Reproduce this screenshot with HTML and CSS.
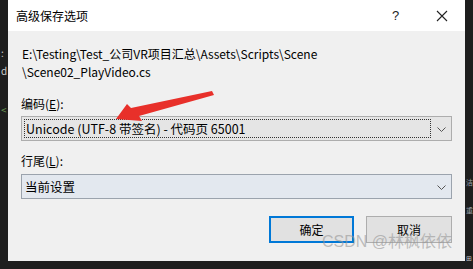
FILE: index.html
```html
<!DOCTYPE html>
<html lang="zh-CN">
<head>
<meta charset="utf-8">
<title>高级保存选项</title>
<link rel="stylesheet" href="styles.css">
</head>
<body>
<div class="screen">
  <div class="edge edge-left">
    <span class="g g1">:</span>
    <span class="g g2">d</span>
    <span class="g g3">&lt;</span>
  </div>
  <div class="dialog">
    <div class="titlebar">
      <span class="title">高级保存选项</span>
      <span class="tb-btn help">?</span>
      <span class="tb-btn close">
        <svg width="12" height="12" viewBox="0 0 12 12"><path d="M1 1L11 11M11 1L1 11" stroke="#222" stroke-width="1.1" fill="none"/></svg>
      </span>
    </div>
    <div class="content">
      <div class="path">E:\Testing\Test_公司VR项目汇总\Assets\Scripts\Scene<br>\Scene02_PlayVideo.cs</div>
      <div class="label first">编码(<u>E</u>):</div>
      <div class="combo combo-focus">
        <span class="focus-rect">Unicode (UTF-8 带签名) - 代码页 65001</span>
        <span class="chev"><svg width="9" height="5" viewBox="0 0 9 5"><path d="M0.5 0.5L4.5 4.5L8.5 0.5" stroke="#555" stroke-width="1" fill="none"/></svg></span>
      </div>
      <div class="label">行尾(<u>L</u>):</div>
      <div class="combo combo-blue">
        <span class="value">当前设置</span>
        <span class="chev"><svg width="9" height="5" viewBox="0 0 9 5"><path d="M0.5 0.5L4.5 4.5L8.5 0.5" stroke="#555" stroke-width="1" fill="none"/></svg></span>
      </div>
      <div class="buttons">
        <span class="btn btn-default">确定</span>
        <span class="btn">取消</span>
      </div>
    </div>
  </div>
  <div class="edge edge-right">
    <span class="r r1">洁</span>
    <span class="r r2">重</span>
    <span class="r r3">⊞</span>
  </div>
  <svg class="arrow" width="473" height="269" viewBox="0 0 473 269">
    <polygon points="116,119 127,104 131,108 212,91 214,95 139,116 142,121" fill="#e8302a"/>
  </svg>
  <div class="watermark">CSDN @林枫依依</div>
</div>
</body>
</html>
```
FILE: styles.css
```css
html, body {
  margin: 0;
  padding: 0;
}
body {
  width: 473px;
  height: 269px;
  overflow: hidden;
  background: #1e1e1e;
  font-family: "Noto Sans CJK SC", "Noto Sans", sans-serif;
  font-size: 12px;
  color: #000;
}
.screen {
  position: relative;
  display: flex;
  height: 261px;
}
.edge {
  width: 8px;
  position: relative;
  overflow: hidden;
  flex: none;
}
.g {
  position: absolute;
  left: 1px;
  font-size: 10px;
  color: #c8c8c8;
  line-height: 10px;
}
.g1 { top: 48px; }
.g2 { top: 66px; }
.g3 { top: 105px; color: #6a9955; }
.r {
  position: absolute;
  left: 1px;
  font-size: 7px;
  line-height: 8px;
  color: #9aa0a8;
}
.r1 { top: 178px; }
.r2 { top: 206px; }
.r3 { top: 254px; color: #c8c8c8; }
.dialog {
  flex: 1;
  background: #f0f0f0;
  display: flex;
  flex-direction: column;
}
.titlebar {
  height: 31px;
  background: #fff;
  display: flex;
  align-items: center;
  padding-left: 8px;
}
.title {
  flex: 1;
  font-size: 12px;
  color: #000;
}
.tb-btn {
  width: 46px;
  height: 31px;
  display: flex;
  align-items: center;
  justify-content: center;
}
.help {
  font-family: "Liberation Sans", sans-serif;
  font-size: 13px;
  color: #222;
  padding-left: 3px;
  box-sizing: border-box;
}
.close { width: 48px; padding-left: 2px; box-sizing: border-box; }
.content {
  padding: 14px 13px 0 13px;
  display: flex;
  flex-direction: column;
}
.path {
  line-height: 18px;
  padding-left: 1px;
}
.label {
  margin-top: 14px;
  line-height: 16px;
}
.label.first { margin-top: 15px; }
.label u { text-underline-offset: 1px; }
.combo {
  margin-top: 4px;
  height: 25px;
  box-sizing: border-box;
  width: 431px;
  display: flex;
  align-items: center;
  border: 1px solid #adadad;
  background: #e5e5e5;
  font-size: 12.5px;
}
.focus-rect {
  flex: 1;
  margin-left: 2px;
  height: 17px;
  line-height: 17px;
  border: 1px dotted #333;
  padding-left: 1px;
}
.chev {
  width: 20px;
  display: flex;
  justify-content: center;
  padding-top: 2px;
}
.combo-blue {
  background: #e3e8ef;
  border-color: #9ba3ad;
  margin-top: 5px;
}
.combo-blue .value {
  flex: 1;
  padding-left: 3px;
}
.combo + .label { margin-top: 12px; }
.buttons {
  margin-top: 17px;
  display: flex;
  justify-content: flex-end;
  gap: 12px;
}
.btn {
  width: 86px;
  height: 27px;
  box-sizing: border-box;
  border: 1px solid #adadad;
  background: #e1e1e1;
  display: flex;
  align-items: center;
  justify-content: center;
}
.btn-default {
  border: 2px solid #0078d7;
  width: 85px;
}
.arrow {
  position: absolute;
  left: 0;
  top: 0;
  pointer-events: none;
}
.watermark {
  position: absolute;
  left: 322px;
  top: 231px;
  font-family: "Liberation Sans", "Noto Sans CJK SC", sans-serif;
  font-size: 16px;
  line-height: 22px;
  color: rgba(150, 150, 150, 0.6);
  white-space: nowrap;
}
```
